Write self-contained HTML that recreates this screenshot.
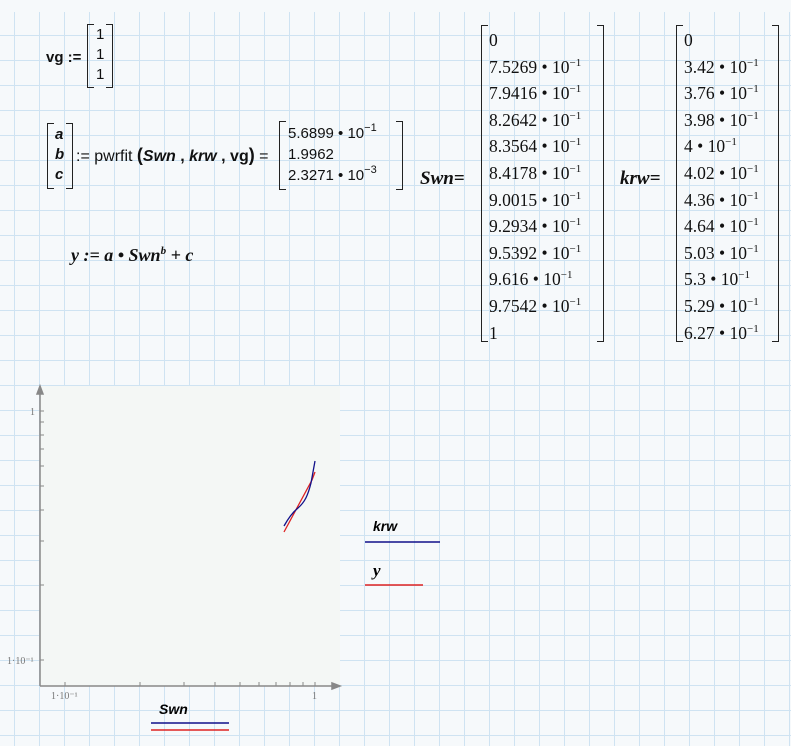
<!DOCTYPE html>
<html><head><style>
body{margin:0;width:791px;height:746px;overflow:hidden;position:relative;background:#f6f9fb;
background-image:linear-gradient(#cfe3f2 1px,transparent 1px),linear-gradient(90deg,#cfe3f2 1px,transparent 1px);
background-size:25px 25px;background-position:14px 10px;font-family:"Liberation Sans",sans-serif;color:#111}
.a{position:absolute;white-space:nowrap}
.br{position:absolute;border:1.5px solid #222;border-right:none;width:6px}
.bl{position:absolute;border:1.5px solid #222;border-left:none;width:6px}
.s{font-family:"Liberation Serif",serif;font-size:17px}
.b{font-weight:bold}
sup{font-size:11px;vertical-align:7px;line-height:0}
</style></head><body>
<div style="position:absolute;left:0;top:0;width:791px;height:12px;background:#f6f9fb"></div>
<div class="a b" style="left:46px;top:49px;font-size:15px">vg :=</div>
<div class="br" style="left:87px;top:24px;height:62px"></div>
<div class="bl" style="left:106px;top:24px;height:62px"></div>
<div class="a" style="left:96px;top:25px;font-size:15px;line-height:20px">1<br>1<br>1</div>
<div class="br" style="left:47px;top:123px;height:64px"></div>
<div class="bl" style="left:66px;top:123px;height:64px"></div>
<div class="a b" style="left:55px;top:125px;font-size:15px;line-height:20px;font-style:italic">a<br>b<br>c</div>
<div class="a" style="left:76px;top:145px;font-size:16px">:= pwrfit <b style="font-size:18px">(</b><b><i>Swn</i> , <i>krw</i> , vg</b><b style="font-size:18px">)</b> =</div>
<div class="br" style="left:279px;top:121px;height:67px"></div>
<div class="bl" style="left:396px;top:121px;height:67px"></div>
<div class="a" style="left:288px;top:123px;font-size:15px;line-height:21px">5.6899 • 10<sup>−1</sup><br>1.9962<br>2.3271 • 10<sup>−3</sup></div>
<div class="a s b" style="left:71px;top:245px;font-style:italic;font-size:18px">y := a • Swn<sup>b</sup> + c</div>
<div class="a s b" style="left:420px;top:168px;font-style:italic;font-size:19px">Swn=</div>
<div class="br" style="left:481px;top:25px;height:315px"></div>
<div class="bl" style="left:597px;top:25px;height:315px"></div>
<div class="a s" style="left:489px;top:27px;line-height:26.6px;font-size:17.5px">0<br>7.5269 • 10<sup>−1</sup><br>7.9416 • 10<sup>−1</sup><br>8.2642 • 10<sup>−1</sup><br>8.3564 • 10<sup>−1</sup><br>8.4178 • 10<sup>−1</sup><br>9.0015 • 10<sup>−1</sup><br>9.2934 • 10<sup>−1</sup><br>9.5392 • 10<sup>−1</sup><br>9.616 • 10<sup>−1</sup><br>9.7542 • 10<sup>−1</sup><br>1</div>
<div class="a s b" style="left:620px;top:168px;font-style:italic;font-size:19px">krw=</div>
<div class="br" style="left:676px;top:25px;height:315px"></div>
<div class="bl" style="left:772px;top:25px;height:315px"></div>
<div class="a s" style="left:684px;top:27px;line-height:26.6px;font-size:17.5px">0<br>3.42 • 10<sup>−1</sup><br>3.76 • 10<sup>−1</sup><br>3.98 • 10<sup>−1</sup><br>4 • 10<sup>−1</sup><br>4.02 • 10<sup>−1</sup><br>4.36 • 10<sup>−1</sup><br>4.64 • 10<sup>−1</sup><br>5.03 • 10<sup>−1</sup><br>5.3 • 10<sup>−1</sup><br>5.29 • 10<sup>−1</sup><br>6.27 • 10<sup>−1</sup></div>
<div style="position:absolute;left:40px;top:386px;width:300px;height:300px;background:#f4f7f5"></div>
<svg class="a" style="left:0;top:370px" width="450" height="376">
<g stroke="#888" stroke-width="1.5" fill="none">
<line x1="40" y1="20" x2="40" y2="316"/><line x1="40" y1="316" x2="335" y2="316"/>
<path d="M37 24 L40 16 L43 24Z" fill="#888"/><path d="M332 313 L340 316 L332 319Z" fill="#888"/>
</g>
<g stroke="#888" stroke-width="1">
<line x1="40" y1="41" x2="44" y2="41"/><line x1="40" y1="52" x2="44" y2="52"/><line x1="40" y1="65" x2="44" y2="65"/><line x1="40" y1="79" x2="44" y2="79"/><line x1="40" y1="96" x2="44" y2="96"/><line x1="40" y1="116" x2="44" y2="116"/><line x1="40" y1="140" x2="44" y2="140"/><line x1="40" y1="171" x2="44" y2="171"/><line x1="40" y1="215" x2="44" y2="215"/><line x1="40" y1="290" x2="44" y2="290"/>
<line x1="65" y1="312" x2="65" y2="316"/><line x1="140" y1="312" x2="140" y2="316"/><line x1="184" y1="312" x2="184" y2="316"/><line x1="215" y1="312" x2="215" y2="316"/><line x1="240" y1="312" x2="240" y2="316"/><line x1="259" y1="312" x2="259" y2="316"/><line x1="276" y1="312" x2="276" y2="316"/><line x1="290" y1="312" x2="290" y2="316"/><line x1="303" y1="312" x2="303" y2="316"/><line x1="315" y1="312" x2="315" y2="316"/>
</g>
<g font-family="Liberation Serif" font-size="10" fill="#777">
<text x="30" y="45">1</text><text x="7" y="294">1·10⁻¹</text>
<text x="51" y="329">1·10⁻¹</text><text x="312" y="329">1</text>
</g>
<path d="M284 162 L312 110 L315 102" stroke="#d22" stroke-width="1.3" fill="none"/>
<path d="M284 156 C289 147 293 142 298 138 C305 132 308 125 311 113 L315 91" stroke="#11118a" stroke-width="1.3" fill="none"/>
<text x="373" y="161" font-family="Liberation Sans" font-weight="bold" font-style="italic" font-size="14">krw</text>
<line x1="365" y1="172" x2="440" y2="172" stroke="#11118a" stroke-width="1.5"/>
<text x="373" y="206" font-family="Liberation Serif" font-weight="bold" font-style="italic" font-size="17">y</text>
<line x1="365" y1="215" x2="423" y2="215" stroke="#d22" stroke-width="1.5"/>
<text x="159" y="344" font-family="Liberation Sans" font-weight="bold" font-style="italic" font-size="14">Swn</text>
<line x1="151" y1="353" x2="229" y2="353" stroke="#11118a" stroke-width="1.5"/>
<line x1="151" y1="360" x2="229" y2="360" stroke="#d22" stroke-width="1.5"/>
<g stroke="#3a8fd0" stroke-width="1.5"><line x1="533" y1="316" x2="547" y2="316"/><line x1="540" y1="309" x2="540" y2="323"/></g>
</svg>
</body></html>
